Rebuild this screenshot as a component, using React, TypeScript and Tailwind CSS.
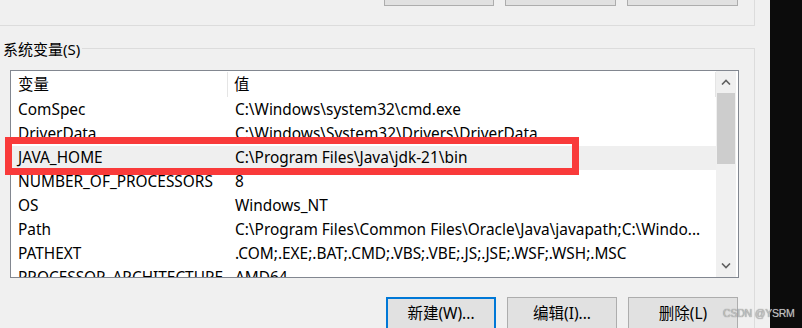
import React from 'react';

const rows: [string, string][] = [
  ['ComSpec', 'C:\\Windows\\system32\\cmd.exe'],
  ['DriverData', 'C:\\Windows\\System32\\Drivers\\DriverData'],
  ['JAVA_HOME', 'C:\\Program Files\\Java\\jdk-21\\bin'],
  ['NUMBER_OF_PROCESSORS', '8'],
  ['OS', 'Windows_NT'],
  ['Path', 'C:\\Program Files\\Common Files\\Oracle\\Java\\javapath;C:\\Windo...'],
  ['PATHEXT', '.COM;.EXE;.BAT;.CMD;.VBS;.VBE;.JS;.JSE;.WSF;.WSH;.MSC'],
  ['PROCESSOR_ARCHITECTURE', 'AMD64'],
];

const font = { fontFamily: '"Noto Sans", "Noto Sans CJK SC", sans-serif' };

const Button = ({ label, focused = false }: { label: string; focused?: boolean }) => (
  <div
    className={`w-[110px] h-[34px] flex items-center justify-center bg-[#e1e1e1] text-[15.5px] text-black ${
      focused ? 'border-2 border-[#0078d7]' : 'border border-[#adadad]'
    }`}
  >
    {label}
  </div>
);

export default function App() {
  return (
    <div className="relative w-[802px] h-[328px] flex bg-[#f0f0f0] overflow-hidden" style={font}>
      <div className="w-[770px] flex flex-col">
        {/* 用户变量 group box (bottom edge) */}
        <div className="w-[755px] h-[26px] border-b border-r border-[#dcdcdc] flex justify-end pr-[16px] shrink-0">
          <div className="flex gap-[11px] h-[6px]">
            <div className="w-[110px] border-x border-b border-[#adadad] bg-[#e1e1e1]" />
            <div className="w-[111px] border-x border-b border-[#adadad] bg-[#e1e1e1]" />
            <div className="w-[111px] border-x border-b border-[#adadad] bg-[#e1e1e1]" />
          </div>
        </div>

        {/* 系统变量 group box */}
        <div className="w-[755px] mt-[13px] flex flex-col flex-1">
          <div className="flex h-[20px] shrink-0">
            <span className="pl-[3px] pr-[2px] text-[15px] leading-[20px] text-black">系统变量(S)</span>
            <div className="flex-1 mt-[9px] border-t border-r border-[#dcdcdc]" />
          </div>
          <div className="flex-1 border-r border-[#dcdcdc] pl-[10px] pt-[11px]">
            {/* list view */}
            <div className="w-[729px] h-[208px] border border-[#828790] bg-white flex overflow-hidden">
              <div className="w-[705px] flex flex-col pl-[1px]">
                <div className="h-[27px] flex shrink-0 text-[15.4px] text-black">
                  <div className="w-[216px] pl-[6px] flex items-center border-r border-[#e5e5e5] my-[1px]">变量</div>
                  <div className="flex-1 pl-[6px] flex items-center border-r border-[#e5e5e5] my-[1px]">值</div>
                </div>
                {rows.map(([name, value]) => (
                  <div
                    key={name}
                    className={`h-[24px] shrink-0 flex items-center text-[15.4px] text-black whitespace-nowrap ${
                      name === 'JAVA_HOME' ? 'bg-[#efefef]' : ''
                    }`}
                  >
                    <div className="w-[217px] pl-[6px] overflow-hidden">{name}</div>
                    <div className="flex-1 pl-[6px] overflow-hidden">{value}</div>
                  </div>
                ))}
              </div>
              {/* scrollbar */}
              <div className="w-[20px] bg-[#f0f0f0] flex flex-col">
                <div className="h-[22px] flex items-center justify-center">
                  <svg width="10" height="6" viewBox="0 0 10 6">
                    <path d="M1 5.5 L5 1.5 L9 5.5" fill="none" stroke="#606060" strokeWidth="1.6" />
                  </svg>
                </div>
                <div className="h-[71px] bg-[#cdcdcd] mx-[1px]" />
                <div className="flex-1" />
                <div className="h-[22px] flex items-center justify-center">
                  <svg width="10" height="6" viewBox="0 0 10 6">
                    <path d="M1 0.5 L5 4.5 L9 0.5" fill="none" stroke="#606060" strokeWidth="1.6" />
                  </svg>
                </div>
              </div>
            </div>
            {/* buttons */}
            <div className="flex justify-end gap-[11px] pr-[16px] mt-[19px] text-black">
              <Button label="新建(W)..." focused />
              <Button label="编辑(I)..." />
              <Button label="删除(L)" />
            </div>
          </div>
        </div>
      </div>
      <div className="flex-1 bg-[#0c0c0c]" />

      {/* red annotation box */}
      <div className="absolute left-[5px] top-[137px] w-[574px] h-[38px] border-[7px] border-[#f93a3a]" />

      {/* watermark */}
      <div
        className="absolute left-[723px] top-[306px] whitespace-nowrap text-[10.5px] text-[#c4c4c4] tracking-[-0.2px]"
        style={{ fontFamily: '"Liberation Sans", sans-serif', textShadow: '0 0 1px #666' }}
      >
        CSDN @YSRM
      </div>
    </div>
  );
}
